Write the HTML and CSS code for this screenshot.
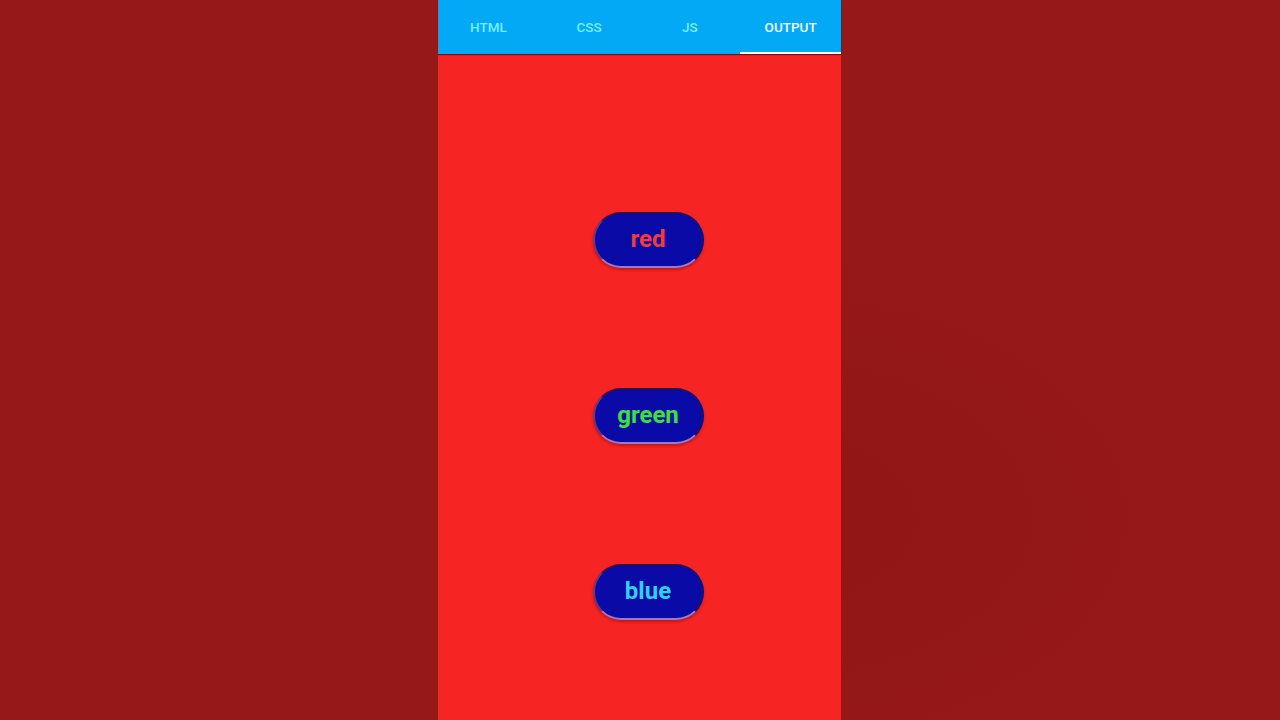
FILE: index.html
```html
<!DOCTYPE html>
<html>
<head>
<meta charset="utf-8">
<link rel="stylesheet" href="styles.css">
</head>
<body>
<div class="stage">
  <div class="phone">
    <div class="tabs">
      <div class="tab">HTML</div>
      <div class="tab">CSS</div>
      <div class="tab">JS</div>
      <div class="tab active">OUTPUT</div>
    </div>
    <div class="output">
      <button class="btn btn-red">red</button>
      <button class="btn btn-green">green</button>
      <button class="btn btn-blue">blue</button>
    </div>
  </div>
</div>
</body>
</html>
```
FILE: styles.css
```css
html, body {
  margin: 0;
  padding: 0;
  height: 100%;
}
body {
  background: #971818;
  font-family: Roboto, "Liberation Sans", sans-serif;
}
.stage {
  height: 720px;
  display: flex;
  justify-content: center;
  background: radial-gradient(ellipse at 62% 72%, #911616 0%, #971818 40%, #971818 100%);
}
.phone {
  width: 403px;
  height: 720px;
  margin-right: 1px;
  display: flex;
  flex-direction: column;
  background: #f72424;
}
.tabs {
  height: 54px;
  display: flex;
  background: #03a9f4;
  box-shadow: 0 1px 1px rgba(60, 10, 10, 0.7);
  position: relative;
  z-index: 1;
}
.tab {
  flex: 1;
  display: flex;
  align-items: center;
  justify-content: center;
  font-size: 13.5px;
  font-weight: 500;
  color: #78eeff;
  padding-top: 1px;
  box-sizing: border-box;
  border-bottom: 2px solid transparent;
}
.tab.active {
  color: #f0fdff;
  border-bottom-color: #ffffff;
}
.output {
  flex: 1;
  display: flex;
  flex-direction: column;
  align-items: center;
  padding-top: 158px;
  padding-left: 17px;
  gap: 120px;
}
.btn {
  width: 111px;
  height: 56px;
  border-radius: 28px;
  background: #0a0aa6;
  border: 2px solid #2a0a55;
  border-bottom-color: #9a7ad6;
  border-left-color: #5a3a96;
  box-shadow: 0 2px 3px rgba(90, 0, 0, 0.35);
  font-family: Roboto, "Liberation Sans", sans-serif;
  font-size: 24px;
  font-weight: 700;
  padding: 0 0 2px 0;
  display: flex;
  align-items: center;
  justify-content: center;
}
.btn-red { color: #f43a3a; }
.btn-green { color: #3ae23a; }
.btn-blue { color: #2ed2f2; }
```
